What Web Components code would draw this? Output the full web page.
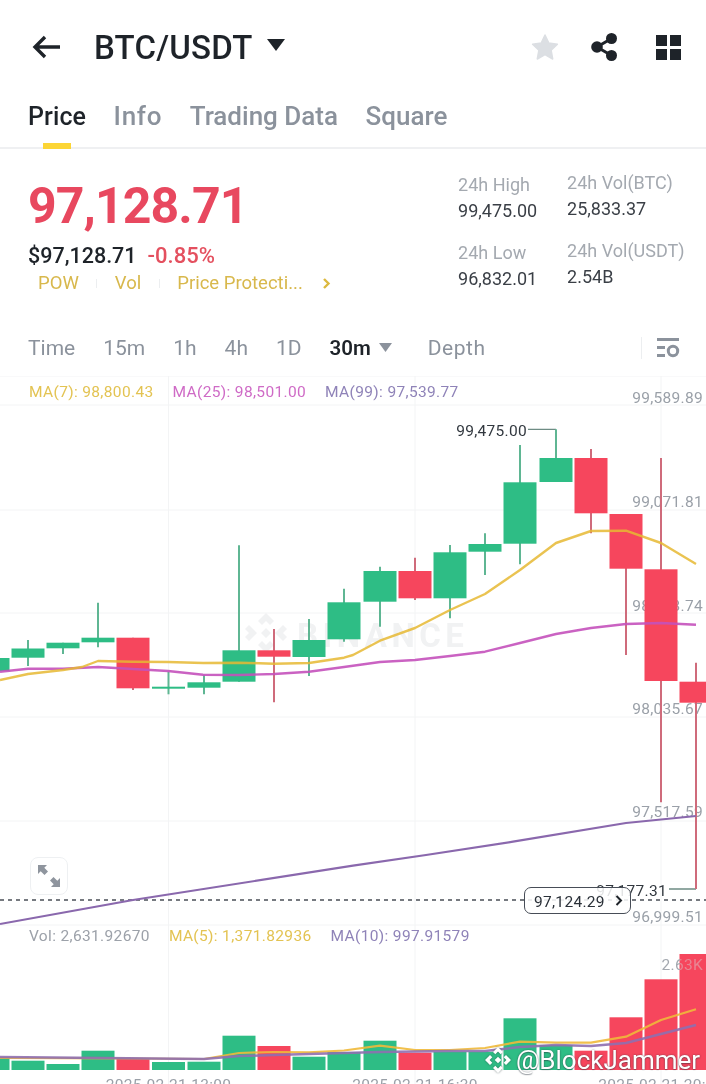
<!DOCTYPE html>
<html>
<head>
<meta charset="utf-8">
<title>BTC/USDT</title>
<style>
  html, body { margin: 0; background: #fff; }
  body { width: 706px; height: 1084px; overflow: hidden; font-family: Roboto, "Liberation Sans", sans-serif; color: #1e2329; }
</style>
</head>
<body>
<market-page></market-page>

<script>
const define = (name, css, html, setup) => {
  customElements.define(name, class extends HTMLElement {
    constructor() {
      super();
      this.attachShadow({ mode: 'open' }).innerHTML = `<style>${css}</style>${html}`;
      if (setup) setup(this.shadowRoot, this);
    }
  });
};

define('pair-header', `
  :host { display: flex; align-items: center; height: 94px; padding: 0 25px 0 32px; box-sizing: border-box; }
  .back { width: 29px; height: 24px; margin-right: 33px; }
  h1 { margin: 0; font: 500 33px Roboto, sans-serif; letter-spacing: .2px; color: #1e2329; }
  .caret { width: 18px; height: 12px; margin-left: 14px; margin-top: -4px; }
  .icons { margin-left: auto; display: flex; align-items: center; }
  .icons .star { margin-right: 32px; }
  .icons .share { margin-right: 38px; }
  svg { display: block; }
`, `
  <svg class="back" viewBox="0 0 29 24" fill="none" stroke="#1e2329" stroke-width="3.4"><path d="M28 12H3M13 2 3 12l10 10"/></svg>
  <h1>BTC/USDT</h1>
  <svg class="caret" viewBox="0 0 18 12"><path d="M0 0h18L9 12z" fill="#1e2329"/></svg>
  <div class="icons">
    <svg class="star" width="28" height="28" viewBox="0 0 28 28"><path d="M14 2l3.800 8 8.600 1.200-6.300 6 1.600 8.800-7.700-4.300L6.300 26l1.600-8.800-6.300-6 8.600-1.200z" fill="#dcdfe3" stroke="#dcdfe3" stroke-width="1.500" stroke-linejoin="round"/></svg>
    <svg class="share" width="27" height="28" viewBox="0 0 27 28"><g fill="#1e2329"><circle cx="20.500" cy="5.500" r="5.500"/><circle cx="6" cy="14" r="5.800"/><circle cx="20.500" cy="22.500" r="5.500"/></g><path d="M20.500 5.500 6 14l14.500 8.500" fill="none" stroke="#1e2329" stroke-width="3"/></svg>
    <svg width="25" height="25" viewBox="0 0 25 25" fill="#1e2329"><rect width="11" height="11"/><rect x="14" width="11" height="11"/><rect y="14" width="11" height="11"/><rect x="14" y="14" width="11" height="11"/></svg>
  </div>
`);

define('section-tabs', `
  :host { display: flex; height: 55px; padding-left: 28px; box-sizing: border-box; border-bottom: 2px solid #eff0f2; gap: 27.500px; font: 500 26px Roboto, sans-serif; color: #8b929c; }
  span { position: relative; line-height: 44px; height: 44px; }
  .on { color: #1e2329; font-size: 25px; letter-spacing: .1px; line-height: 46px; }
  .wide { letter-spacing: .7px; }
  .on::after { content: ""; position: absolute; left: 15px; width: 28px; height: 6px; top: 49px; background: #fcd535; }
`, `<span class="on">Price</span><span class="wide">Info</span><span>Trading Data</span><span>Square</span>`);

define('ticker-panel', `
  :host { display: flex; justify-content: space-between; height: 174px; box-sizing: border-box; padding: 31px 21.500px 0 28px; }
  .price { font: 700 50px/52px Roboto, sans-serif; color: #e8485f; letter-spacing: -.9px; }
  .fiat { display: flex; gap: 11px; margin-top: 11px; font: 500 21.500px/25px Roboto, sans-serif; color: #1e2329; }
  .fiat b { font-weight: 500; font-size: 22px; color: #e4505f; }
  .tags { display: flex; align-items: center; margin-top: 4px; margin-left: 10px; font: 400 18.500px/22px Roboto, sans-serif; color: #d8b84c; }
  .tags i { width: 1px; height: 9px; background: #eceef0; margin: 0 17.500px; }
  .tags svg { margin-left: 19px; }
  .stats { display: grid; grid-template-columns: 109px auto; align-content: start; row-gap: 16px; margin-top: -8px; }
  .stat { font: 400 18px/26px Roboto, sans-serif; color: #3a3f46; }
  .stat small { display: block; font-size: 18px; color: #a4a9b0; }
  .stat.up { margin-top: -2px; }
`, `
  <div>
    <div class="price">97,128.71</div>
    <div class="fiat"><span>$97,128.71</span><b>-0.85%</b></div>
    <div class="tags"><span>POW</span><i></i><span>Vol</span><i></i><span>Price Protecti...</span>
      <svg width="9" height="11" viewBox="0 0 9 11" fill="none" stroke="#dcb93f" stroke-width="2.400"><path d="M2 1l4.500 4.500L2 10"/></svg></div>
  </div>
  <div class="stats">
    <div class="stat"><small>24h High</small>99,475.00</div>
    <div class="stat up"><small>24h Vol(BTC)</small>25,833.37</div>
    <div class="stat"><small>24h Low</small>96,832.01</div>
    <div class="stat up"><small>24h Vol(USDT)</small>2.54B</div>
  </div>
`);

define('interval-bar', `
  :host { display: flex; align-items: center; height: 53px; padding: 0 26px 4px 28px; box-sizing: border-box; font: 400 21px Roboto, sans-serif; color: #8b929c; }
  span { margin-right: 28px; }
  .on { font-weight: 600; color: #1e2329; margin-right: 8px; font-size: 20.500px; }
  .caret { margin-right: 36px; }
  .depth { letter-spacing: .5px; }
  .end { margin-left: auto; display: flex; align-items: center; gap: 15px; }
  .end i { width: 1px; height: 22px; background: #eceef0; }
  svg { display: block; }
`, `
  <span>Time</span><span>15m</span><span>1h</span><span>4h</span><span>1D</span><span class="on">30m</span>
  <svg class="caret" width="13" height="9" viewBox="0 0 13 9"><path d="M0 0h13L6.500 9z" fill="#8b929c"/></svg>
  <span class="depth">Depth</span>
  <div class="end"><i></i>
    <svg width="23" height="22" viewBox="0 0 23 22" fill="#8b929c"><rect x="0" y="1" width="22" height="3"/><rect x="0" y="9" width="8" height="3"/><rect x="0" y="17" width="8" height="3"/><circle cx="16" cy="14" r="4.700" fill="none" stroke="#8b929c" stroke-width="3"/></svg>
  </div>
`);

define('legend-row', `
  :host { position: absolute; left: 29px; display: flex; font: 400 15.500px/18px Roboto, sans-serif; letter-spacing: .35px; white-space: nowrap; }
  ::slotted(span) { margin-right: 19px; }
`, `<slot></slot>`);

define('last-price-tag', `
  :host { position: absolute; left: 524px; top: 511px; width: 107px; height: 27px; box-sizing: border-box; display: flex; align-items: center; padding: 2px 0 0 9px; border: 1.500px solid #474d57; border-radius: 7px; background: rgba(255,255,255,.86); font: 400 15.500px Roboto, sans-serif; letter-spacing: .3px; color: #2b3139; }
  svg { margin: -3px 0 0 10px; }
`, `<slot></slot><svg width="8" height="11" viewBox="0 0 8 11" fill="none" stroke="#1e2329" stroke-width="2"><path d="M1.500 1l4.500 4.500-4.500 4.500"/></svg>`);

define('expand-button', `
  :host { position: absolute; left: 30px; top: 481px; width: 38px; height: 38px; box-sizing: border-box; border: 1.500px solid #eef0f2; border-radius: 8px; background: #fff; }
  svg { display: block; margin: 6px; }
`, `<svg width="24" height="24" viewBox="0 0 24 24" fill="#8f959e"><path d="M1 1h9L7.300 3.700 11 7.500 7.500 11 3.700 7.300 1 10z"/><path d="M23 23h-9l2.700-2.700L13 16.500l3.500-3.500 3.800 3.700L23 14z"/></svg>`);

define('repost-mark', `
  :host { position: absolute; left: 484px; top: 669px; display: flex; align-items: center; gap: 4px; font: 400 26px/30px Roboto, sans-serif; color: #fff; text-shadow: 0 0 2px rgba(40,50,60,.6), 0 1px 1px rgba(40,50,60,.35); white-space: nowrap; }
  svg { display: block; filter: drop-shadow(0 0 1px rgba(40,60,60,.6)); }
`, `<svg width="28" height="28" viewBox="0 0 28 28" fill="#fff"><path d="M14 1l5 5-2.300 2.300L14 5.600l-2.700 2.700L9 6z"/><path d="M6 9l2.300 2.300L5.600 14l2.700 2.700L6 19l-5-5z"/><path d="M22 9l5 5-5 5-2.300-2.300 2.700-2.700-2.700-2.700z"/><path d="M14 10.700l3.300 3.300-3.300 3.300-3.300-3.300z"/><path d="M9 22l2.300-2.300 2.700 2.700 2.700-2.700L19 22l-5 5z"/></svg><slot></slot>`);

// candles: x, body top, body bottom, wick top, wick bottom, up?
const CANDLES = [
  [-7, 658, 671, 658, 671, 1], [28, 648.5, 657.7, 640, 666, 1], [63, 642.7, 648.3, 642.7, 654, 1],
  [98, 637.7, 642.3, 602.7, 647.3, 1], [133, 637.7, 688.3, 637.7, 690, 0], [168.5, 686.7, 688.7, 671.7, 694.3, 1],
  [204, 682.3, 687.7, 675, 694.3, 1], [239, 650.3, 681.7, 545.3, 681.7, 1], [274, 650.3, 656.7, 629, 702.3, 0],
  [309, 640, 657, 619, 676, 1], [344, 602.3, 639.3, 588.7, 641.7, 1], [380, 571, 601.7, 566.7, 626.7, 1],
  [415, 571, 598.3, 557.7, 600, 0], [450, 552.3, 598.3, 545, 618.3, 1], [485, 544, 551.7, 533.3, 575, 1],
  [520, 482.3, 543.7, 445, 564.3, 1], [556, 458, 482, 429.3, 482, 1], [591, 458, 513.3, 449, 533.3, 0],
  [626, 514, 568.7, 514, 655, 0], [661, 569.3, 681, 458, 802.3, 0], [696, 681.7, 702.7, 662.7, 889, 0],
];
// volume bar tops, same x order as candles; all bars end at y 1070
const VOLUMES = [1057, 1060.7, 1064, 1050.7, 1058.3, 1062, 1061.7, 1035.7, 1046, 1056.7, 1052, 1040.7, 1052.7, 1051.7, 1051.7, 1018.3, 1045, 1050.7, 1017.3, 979.3, 954];
const LINES = {
  ma7: '0,680 28,674 63,670 82,667 98,661 133,661.7 168,662 203,663 239,662.7 274,663.7 309,663 344,657.7 353,655 380,640.7 415,628 450,610 485,594 520,570 556,543 591,531 626,530.7 661,543 696,564',
  ma25: '0,671.7 28,668.7 63,668.7 98,667 133,669 168,671 203,674.7 239,675 274,674 309,671.7 344,667 380,662 415,660 450,656 485,651.7 520,643 556,634 591,628 626,624 661,623 696,624.7',
  ma99: '0,924 133,900 353,865.7 426,855 513,841.7 626,823 696,816',
  vol5: '0,1058 133,1058.5 204,1059 239,1053 274,1052 309,1052.3 344,1050.5 380,1045.7 415,1050 450,1050 485,1048 520,1041.7 556,1042.7 591,1042.7 626,1036.7 661,1020 696,1009.3',
  vol10: '0,1057 204,1059 239,1056 274,1055 344,1053 380,1052 450,1051 485,1051 520,1047 556,1045 591,1046 626,1043 661,1034 696,1025',
};
const UP = '#2ebd85';
const DOWN = '#f6465d';
// chart starts at y 376 on the page, the svg keeps page coordinates in its viewBox
const buildChart = () => {
  const grid = [376, 405, 510, 613, 717, 821, 925].map(y => `<path d="M0 ${y}H706" stroke="#f3f4f5"/>`).join('')
    + [168.5, 415, 661].map(x => `<path d="M${x} 376V1084" stroke="#f3f4f5"/>`).join('');
  const axis = [['99,589.89', 403], ['99,071.81', 507], ['98,553.74', 611], ['98,035.67', 714], ['97,517.59', 817], ['96,999.51', 922]]
    .map(([t, y]) => `<text x="703" y="${y}" text-anchor="end" class="axis">${t}</text>`).join('');
  const candles = CANDLES.map(([x, top, bot, wt, wb, up]) => {
    const c = up ? UP : DOWN, w = up ? '#5fb693' : '#cf6b7b';
    return `<path d="M${x} ${wt}V${wb}" stroke="${w}" stroke-width="2"/><rect x="${x - 16.5}" y="${top}" width="33" height="${bot - top}" fill="${c}"/>`;
  }).join('');
  const bars = VOLUMES.map((top, i) => `<rect x="${CANDLES[i][0] - 16.5}" y="${top}" width="33" height="${1070 - top}" fill="${CANDLES[i][5] ? UP : DOWN}"/>`).join('');
  const line = (pts, color, w, o = 1) => `<polyline points="${pts}" fill="none" stroke="${color}" stroke-width="${w}" stroke-opacity="${o}" stroke-linejoin="round"/>`;
  return `<svg viewBox="0 376 706 708" width="706" height="708">
    <defs><linearGradient id="overbar" gradientUnits="userSpaceOnUse" x1="662" x2="703" y1="0" y2="0">
      <stop offset=".44" stop-color="#a3a8af"/><stop offset=".44" stop-color="#e88492"/></linearGradient></defs>
    ${grid}
    <g fill="#f1f2f3">
      <path d="M266 613l8 8-4 4-4-4-4 4-4-4zM266 653l-8-8 4-4 4 4 4-4 4 4zM249 625l8 8-8 8-4-4 4-4-4-4zM283 625l4 4-4 4 4 4-4 4-8-8zM266 628l5 5-5 5-5-5z"/>
      <text x="297" y="647" class="brand">BINANCE</text>
    </g>
    ${axis}
    <path d="M528 429.3H556M669 889H696" stroke="#6e8c84" stroke-width="1.3"/>
    <path d="M0 900H706" stroke="#4a4f57" stroke-width="1.5" stroke-dasharray="4 4"/>
    ${candles}
    ${line(LINES.ma25, '#c451bb', 2.4, .9)}
    ${line(LINES.ma7, '#e6b832', 2.4, .85)}
    ${line(LINES.ma99, '#8a68ad', 2.2)}
    ${bars}
    ${line(LINES.vol5, '#efb93a', 2.2, .9)}
    ${line(LINES.vol10, '#8f6fb0', 2.5, .9)}
    <text x="527" y="436" text-anchor="end" class="mark">99,475.00</text>
    <text x="667" y="896" text-anchor="end" class="mark">97,177.31</text>
    <text x="703" y="970" text-anchor="end" class="axis" style="fill:url(#overbar)">2.63K</text>
    ${[['13:00', 168.5], ['16:30', 415], ['20:00', 661]].map(([t, x]) => `<text x="${x}" y="1090" text-anchor="middle" class="axis">2025-02-21 ${t}</text>`).join('')}
  </svg>`;
};

define('kline-chart', `
  :host { display: block; position: relative; height: 708px; overflow: hidden; }
  svg { display: block; }
  .axis { font: 400 15.500px Roboto, sans-serif; letter-spacing: .3px; fill: #9aa0a8; }
  .mark { font: 400 15.500px Roboto, sans-serif; letter-spacing: .3px; fill: #32383f; }
  .brand { font: 700 33px Roboto, sans-serif; letter-spacing: 4.5px; }
`, buildChart() + `<slot></slot>`);

define('market-page', `
  :host { display: block; width: 706px; height: 1084px; overflow: hidden; filter: blur(.45px); }
  .ma7 { color: #e3c352; }
  .ma25 { color: #cf6bc6; }
  .ma99 { color: #8f83b8; }
  .vol { color: #9ca1a9; }
`, `
  <pair-header></pair-header>
  <section-tabs></section-tabs>
  <ticker-panel></ticker-panel>
  <interval-bar></interval-bar>
  <kline-chart>
    <legend-row style="top:7px"><span class="ma7">MA(7): 98,800.43</span><span class="ma25">MA(25): 98,501.00</span><span class="ma99">MA(99): 97,539.77</span></legend-row>
    <expand-button></expand-button>
    <last-price-tag>97,124.29</last-price-tag>
    <legend-row style="top:551px"><span class="vol">Vol: 2,631.92670</span><span class="ma7">MA(5): 1,371.82936</span><span class="ma99">MA(10): 997.91579</span></legend-row>
    <repost-mark>@BlockJammer</repost-mark>
  </kline-chart>
`);
</script>
</body>
</html>
